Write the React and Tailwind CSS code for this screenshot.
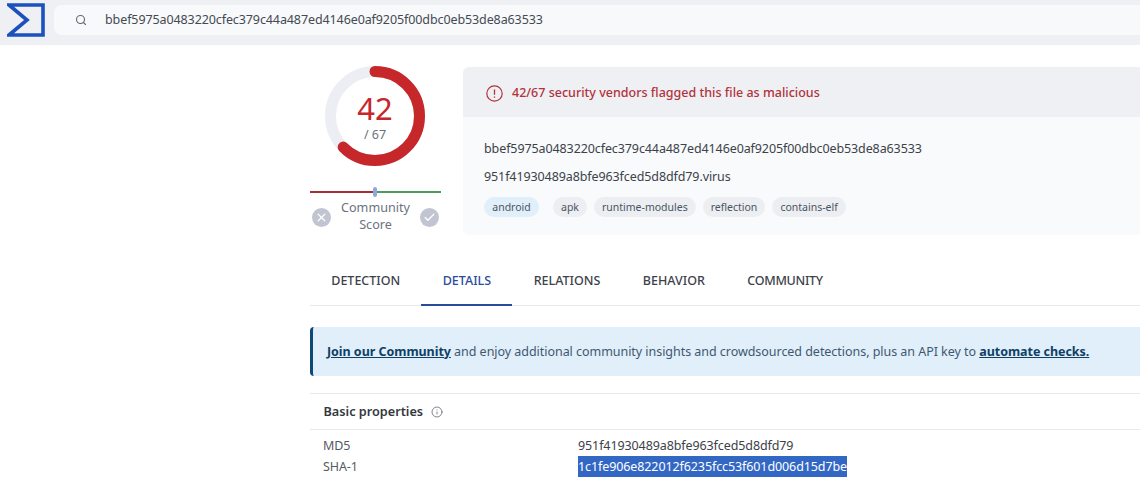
import React from 'react';
import { Search, Check, X, Info } from 'lucide-react';

const font = "font-['Noto_Sans','Open_Sans',sans-serif]";

const tags = ['apk', 'runtime-modules', 'reflection', 'contains-elf'];

const Logo = () => (
  <svg width="38" height="34" viewBox="0 0 38 34" fill="none" className="mb-[5px]">
    <path d="M2 2H36V32H2L20 17Z" stroke="#1c50bd" strokeWidth="3.6" />
  </svg>
);

const Gauge = () => (
  <div className="relative w-[100px] h-[100px] -mt-[1px] -ml-[1px]">
    <svg width="100" height="100" viewBox="0 0 100 100" fill="none" className="-rotate-90">
      <circle cx="50" cy="50" r="44.5" stroke="#eceef3" strokeWidth="11" />
      <circle cx="50" cy="50" r="44.5" stroke="#c5272a" strokeWidth="11" strokeLinecap="round" strokeDasharray="175 280" />
    </svg>
    <div className="absolute inset-0 pt-[2px] flex flex-col items-center justify-center">
      <span className="text-[31px] leading-[36px] text-[#c5272a]">42</span>
      <span className="text-[12.5px] leading-[18px] text-[#6b7280]">/ 67</span>
    </div>
  </div>
);

const App = () => {
  return (
    <div className={`${font} w-[1140px] h-[479px] bg-white overflow-hidden text-[#3d4249]`}>
      {/* Top bar */}
      <header className="h-[45px] bg-[#eef0f3] flex items-center pl-[7px]">
        <Logo />
        <div className="ml-[9px] mb-[5px] flex-1 h-[30px] bg-[#f8f9fb] rounded-l-lg flex items-center pl-[21px]">
          <Search size={12} strokeWidth={2.2} className="text-[#5f6670]" />
          <span className="ml-[18px] pt-[1px] text-[12.5px] tracking-[-0.1px] text-[#444a52]">bbef5975a0483220cfec379c44a487ed4146e0af9205f00dbc0eb53de8a63533</span>
        </div>
      </header>

      <main className="pl-[310px]">
        {/* Summary */}
        <section className="flex pt-[22px]">
          <div className="w-[131px] shrink-0 flex flex-col items-center">
            <Gauge />
            <div className="relative w-full h-[2px] mt-[25px] flex">
              <div className="w-[65px] bg-[#a62f35]" />
              <div className="flex-1 bg-[#4c9a5c]" />
              <div className="absolute left-[63px] top-[-4px] w-[4px] h-[10px] rounded-sm bg-[#8fa8d8]" />
            </div>
            <div className="w-full mt-[6px] flex items-center justify-between pl-[2px] pr-[2px]">
              <span className="mt-[2px] w-[19px] h-[19px] rounded-full bg-[#c1c5d1] flex items-center justify-center">
                <X size={13} strokeWidth={2.4} className="text-white" />
              </span>
              <span className="text-[12.6px] leading-[17px] text-center text-[#6b7280]">Community<br />Score</span>
              <span className="mt-[2px] w-[19px] h-[19px] rounded-full bg-[#c1c5d1] flex items-center justify-center">
                <Check size={13} strokeWidth={2.4} className="text-white" />
              </span>
            </div>
          </div>

          <div className="ml-[22px] flex-1 h-[168px] rounded-l-md bg-[#f8fafc]">
            <div className="h-[50px] bg-[#eef0f3] rounded-tl-md flex items-center pl-[23px] pt-[2px]">
              <svg width="17" height="17" viewBox="0 0 17 17" fill="none">
                <circle cx="8.5" cy="8.5" r="7.7" stroke="#b3323c" strokeWidth="1.2" />
                <path d="M8.5 4.5V9.8M8.5 11.5V12.7" stroke="#b3323c" strokeWidth="1.3" />
              </svg>
              <span className="ml-[9px] text-[12.5px] font-medium text-[#b3323c]">42/67 security vendors flagged this file as malicious</span>
            </div>
            <div className="pl-[21px] pt-[22px]">
              <p className="text-[12.5px] tracking-[-0.1px] leading-[20px]">bbef5975a0483220cfec379c44a487ed4146e0af9205f00dbc0eb53de8a63533</p>
              <p className="mt-[8px] text-[12.5px] tracking-[-0.1px] leading-[20px]">951f41930489a8bfe963fced5d8dfd79.virus</p>
              <div className="flex mt-[10px] items-center">
                <span className="w-[55px] h-[20px] text-center rounded-full bg-[#e1effa] text-[10.5px] leading-[20px] text-[#4a5563]">android</span>
                <div className="ml-[14px] flex gap-[7px]">
                  {tags.map((tag) => (
                    <span key={tag} className="h-[20px] px-[8px] rounded-full bg-[#eceef2] text-[10.5px] leading-[20px] text-[#4a5563]">{tag}</span>
                  ))}
                </div>
              </div>
            </div>
          </div>
        </section>

        {/* Tabs */}
        <nav className="mt-[25px] h-[46px] border-b border-[#e8e9ec] flex text-[12.5px] font-medium text-[#3d4249]">
          <a className="px-[21.25px] pt-[12px]">DETECTION</a>
          <a className="px-[21.25px] pt-[12px] text-[#2a4b9b] border-b-[2px] border-[#2a4b9b] h-[46px]">DETAILS</a>
          <a className="px-[21.25px] pt-[12px]">RELATIONS</a>
          <a className="px-[21.25px] pt-[12px]">BEHAVIOR</a>
          <a className="px-[21.25px] pt-[12px] tracking-[-0.3px]">COMMUNITY</a>
        </nav>

        {/* Banner */}
        <div className="mt-[21px] h-[49px] bg-[#e1effa] border-l-[3px] border-[#0c4a75] rounded-l-sm flex items-center pl-[14px] pt-[1px] text-[12.5px] tracking-[-0.04px] text-[#3f5870]">
          <span>
            <a className="font-bold underline text-[#0f3f66]">Join our Community</a> and enjoy additional community insights and crowdsourced detections, plus an API key to <a className="font-bold underline text-[#0f3f66]">automate checks.</a>
          </span>
        </div>

        {/* Basic properties */}
        <section className="mt-[17px] border-t border-[#e8e9ec]">
          <div className="h-[36px] border-b border-[#e8e9ec] flex items-center pl-[13.5px]">
            <span className="text-[12.7px] font-semibold text-[#333840]">Basic properties</span>
            <Info size={12} strokeWidth={1.5} className="ml-[8px] text-[#555b64]" />
          </div>
          <div className="pl-[13px] pt-[5px] text-[12.5px] leading-[21px] tracking-[-0.1px] grid grid-cols-[255px_1fr]">
            <span className="text-[#555b64]">MD5</span>
            <span>951f41930489a8bfe963fced5d8dfd79</span>
            <span className="text-[#555b64]">SHA-1</span>
            <span><span className="inline-block bg-[#3367c4] text-white">1c1fe906e822012f6235fcc53f601d006d15d7be</span></span>
          </div>
        </section>
      </main>
    </div>
  );
};

export default App;
